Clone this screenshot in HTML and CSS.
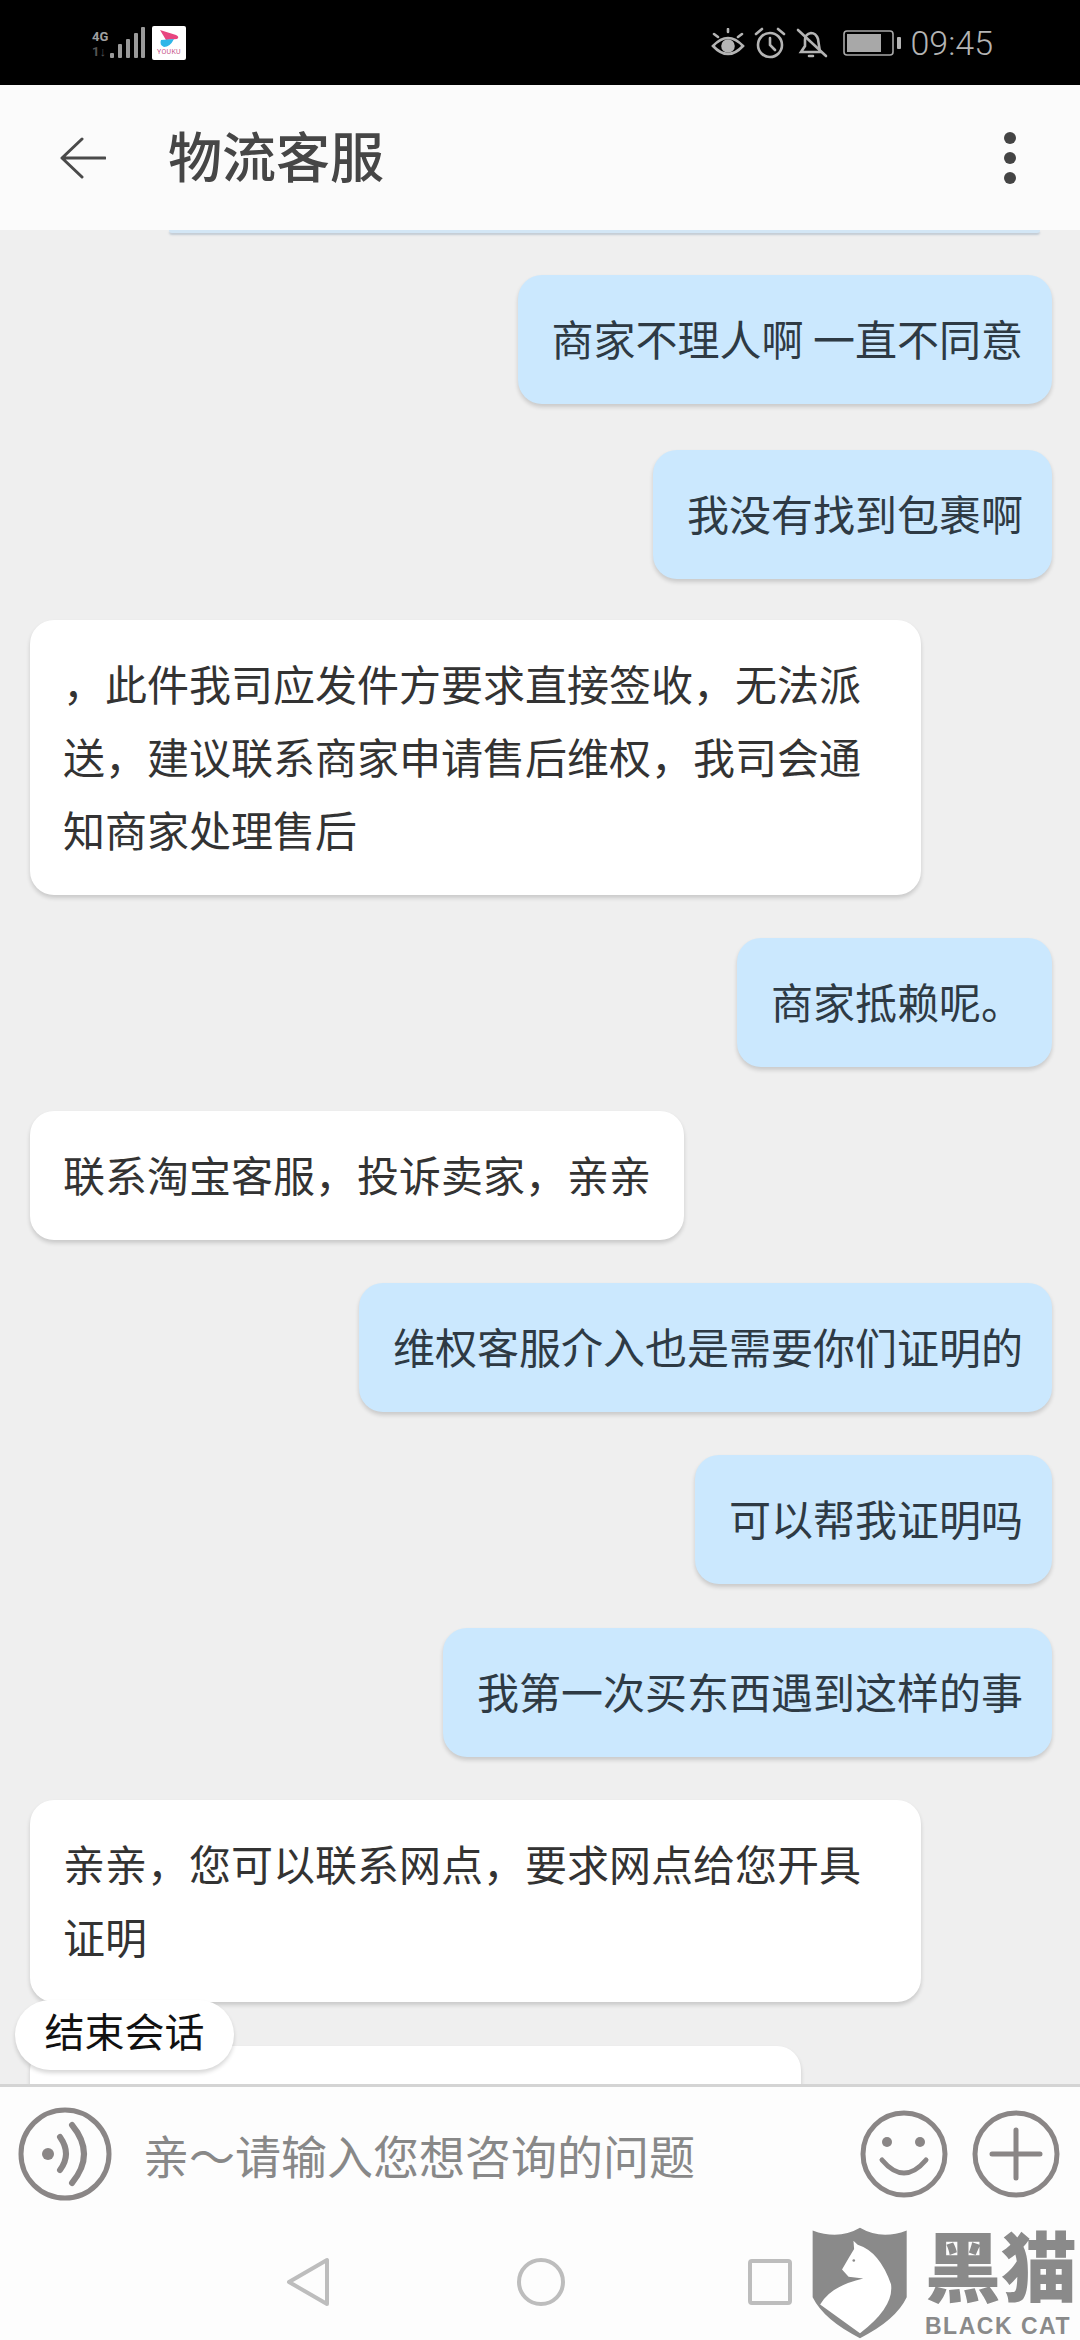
FILE: index.html
```html
<!DOCTYPE html>
<html lang="zh-CN">
<head>
<meta charset="utf-8">
<title>物流客服</title>
<link rel="stylesheet" href="styles.css">
</head>
<body>
<div class="page">
  <div class="status">
    <div class="net">
      <div class="net-labels"><span class="g4">4G</span><span class="g1">1↓</span></div>
      <svg class="signal" width="36" height="34" viewBox="0 0 36 34"><g fill="#9a9a9a"><rect x="0" y="27" width="4" height="5" rx="1"/><rect x="8" y="18" width="4" height="14" rx="1"/><rect x="16" y="13" width="4" height="19" rx="1"/><rect x="24" y="7" width="4" height="25" rx="1"/><rect x="31" y="1" width="4" height="31" rx="1"/></g></svg>
      <div class="youku">
        <svg width="24" height="20" viewBox="0 0 24 20"><path d="M3 2 L19 7 Q23 9 20 11 L9 12 Z" fill="#e8457f"/><path d="M4 12 L17 11 Q13 19 7 19 Q2 17 4 12Z" fill="#2fb7e8"/></svg>
        <span class="youku-name">YOUKU</span>
      </div>
    </div>
    <div class="sys">
      <svg class="sys-icon" width="36" height="30" viewBox="0 0 36 30" fill="none" stroke="#b4b4b4" stroke-width="2.6" stroke-linecap="round"><path d="M3 18 Q18 2 33 18 Q18 34 3 18Z"/><circle cx="18" cy="18" r="5.5" fill="#b4b4b4"/><path d="M4 6 L8 9M18 1 V4M32 6 L28 9"/></svg>
      <svg class="sys-icon" width="32" height="32" viewBox="0 0 32 32" fill="none" stroke="#b4b4b4" stroke-width="2.6" stroke-linecap="round"><circle cx="16" cy="18" r="12"/><path d="M16 11 V18 L21 23M2 7 L8 2M30 7 L24 2"/></svg>
      <svg class="sys-icon" width="32" height="32" viewBox="0 0 32 32" fill="none" stroke="#b4b4b4" stroke-width="2.6" stroke-linecap="round"><path d="M5 25 H24 L22 12 Q20 6 15 6 Q9 7 9 13 V19 Z"/><path d="M2 3 L30 29M13 29 H17"/></svg>
      <svg class="battery" width="58" height="26" viewBox="0 0 58 26"><rect x="1" y="1" width="49" height="24" rx="3" fill="none" stroke="#a8a8a8" stroke-width="1.6"/><rect x="4" y="4" width="34" height="18" fill="#a8a8a8"/><rect x="54" y="7" width="4" height="12" rx="1" fill="#b4b4b4"/></svg>
      <span class="time">09:45</span>
    </div>
  </div>

  <header class="topbar">
    <svg class="back" width="46" height="42" viewBox="0 0 46 42" fill="none" stroke="#4a4a4a" stroke-width="3" stroke-linecap="round" stroke-linejoin="round"><path d="M22 2 L2 21 L22 40M2 21 H45"/></svg>
    <h1 class="title">物流客服</h1>
    <div class="dots"><i></i><i></i><i></i></div>
  </header>

  <main class="chat">
    <div class="sliver"></div>
    <div class="bubble me">商家不理人啊 一直不同意</div>
    <div class="bubble me nudged">我没有找到包裹啊</div>
    <div class="bubble them">，此件我司应发件方要求直接签收，无法派送，建议联系商家申请售后维权，我司会通知商家处理售后</div>
    <div class="bubble me">商家抵赖呢。</div>
    <div class="bubble them">联系淘宝客服，投诉卖家，亲亲</div>
    <div class="bubble me">维权客服介入也是需要你们证明的</div>
    <div class="bubble me">可以帮我证明吗</div>
    <div class="bubble me">我第一次买东西遇到这样的事</div>
    <div class="bubble them">亲亲，您可以联系网点，要求网点给您开具证明</div>
    <div class="bubble them cut"></div>
    <div class="pill">结束会话</div>
  </main>

  <div class="inputbar">
    <svg class="voice" width="94" height="94" viewBox="0 0 94 94" fill="none" stroke="#8a8686" stroke-width="5" stroke-linecap="round"><circle cx="47" cy="47" r="44"/><circle cx="30" cy="47" r="6" fill="#8a8686" stroke="none"/><path d="M42 30 Q54 47 42 63" stroke-width="6"/><path d="M54 18 Q78 47 54 76" stroke-width="6"/></svg>
    <span class="placeholder">亲～请输入您想咨询的问题</span>
    <svg class="round" width="88" height="88" viewBox="0 0 88 88" fill="none" stroke="#8a8686" stroke-width="5" stroke-linecap="round"><circle cx="44" cy="44" r="41"/><circle cx="27" cy="32" r="5" fill="#8a8686" stroke="none"/><circle cx="60" cy="32" r="5" fill="#8a8686" stroke="none"/><path d="M22 50 Q44 76 66 50"/></svg>
    <svg class="round plus" width="88" height="88" viewBox="0 0 88 88" fill="none" stroke="#8a8686" stroke-width="5" stroke-linecap="round"><circle cx="44" cy="44" r="41"/><path d="M44 20 V68M20 44 H68"/></svg>
  </div>

  <nav class="navbar">
    <svg width="44" height="50" viewBox="0 0 44 50" fill="none" stroke="#bdbdbd" stroke-width="4" stroke-linejoin="round"><path d="M41 3 V47 L3 25 Z"/></svg>
    <svg class="nav-home" width="50" height="50" viewBox="0 0 50 50" fill="none" stroke="#bdbdbd" stroke-width="4"><circle cx="25" cy="25" r="22"/></svg>
    <svg width="44" height="46" viewBox="0 0 44 46" fill="none" stroke="#bdbdbd" stroke-width="4"><rect x="2" y="2" width="40" height="42" rx="2"/></svg>
  </nav>

  <div class="mark">
    <svg class="shield" width="97" height="112" viewBox="90 195 297 342"><path d="M95 205 Q175 235 240 197 Q305 235 383 205 L383 410 Q350 480 240 535 Q130 480 95 410 Z" fill="#8a8a8a"/><path d="M220 237 L233 249 Q300 270 335 370 Q345 440 240 520 L118 432 Q150 375 250 352 L205 347 L185 325 L205 290 L222 262 Z" fill="#fff"/><circle cx="221" cy="297" r="4" fill="#8a8a8a"/></svg>
    <div class="mark-text">
      <span class="mark-cn">黑猫</span>
      <span class="mark-en">BLACK CAT</span>
    </div>
  </div>
</div>
</body>
</html>
```
FILE: styles.css
```css
* { box-sizing: border-box; }
html, body { margin: 0; padding: 0; }
body { width: 1080px; height: 2340px; overflow: hidden; font-family: "Noto Sans CJK SC", "Noto Sans", sans-serif; background: #fbfbfb; }
.page { position: relative; width: 1080px; height: 2340px; display: flex; flex-direction: column; overflow: hidden; }

.status { height: 85px; flex: none; background: #000; display: flex; align-items: center; justify-content: space-between; padding: 0 87px 0 92px; }
.net { display: flex; align-items: center; }
.net-labels { display: flex; flex-direction: column; width: 18px; font: bold 13px/15px "Roboto", sans-serif; color: #a0a0a0; margin-top: 2px; }
.g1 { color: #555; }
.youku { width: 34px; height: 34px; margin-left: 6px; background: #fff; border-radius: 2px; display: flex; flex-direction: column; align-items: center; overflow: hidden; padding-top: 2px; }
.youku-name { font: 7px/9px "Roboto", sans-serif; color: #c8558a; letter-spacing: .3px; }
.sys { display: flex; align-items: center; }
.sys-icon { margin-right: 10px; }
.sys-icon:first-child { margin-right: 8px; }
.battery { margin-left: 5px; margin-right: 9px; }
.time { font: 300 34px/40px "Roboto", sans-serif; color: #b4b4b4; }

.topbar { height: 145px; flex: none; background: #fbfbfb; display: flex; align-items: center; padding: 0 64px 0 60px; z-index: 1; }
.back { flex: none; }
.title { margin: 0 0 6px 62px; font-size: 54px; line-height: 70px; font-weight: 500; color: #464646; flex: 1; }
.dots { display: flex; flex-direction: column; gap: 8px; }
.dots i { display: block; width: 12px; height: 12px; border-radius: 50%; background: #444; }

.chat { position: relative; height: 1857px; flex: none; background: #efefef; overflow: hidden; display: flex; flex-direction: column; gap: 43.4px; border-bottom: 3px solid #d4d4d4; }
.sliver { flex: none; height: 3px; margin: 0 40px -1.4px 169px; background: #d3e6f5; border-radius: 0 0 8px 8px; box-shadow: 0 2px 2px rgba(90,120,150,.3); }
.bubble { flex: none; font-size: 42px; line-height: 73px; padding: 26px 33px 30px; border-radius: 24px; box-shadow: 0 3px 4px rgba(0,0,0,.16); }
.me { align-self: flex-end; margin-right: 28px; padding-left: 34px; padding-right: 29px; background: #cbe8fe; color: #2e3a44; }
.nudged { margin-top: 3px; margin-bottom: -3px; }
.them { align-self: flex-start; margin-left: 30px; background: #fff; color: #333; max-width: 891px; }
.cut { width: 771px; height: 120px; }
.pill { position: absolute; left: 15px; top: 1770px; width: 219px; height: 70px; border-radius: 35px; background: #fff; font-size: 40px; line-height: 60px; text-align: center; color: #111; box-shadow: 0 3px 4px rgba(0,0,0,.16); }

.inputbar { height: 133px; flex: none; background: #fdfdfd; display: flex; align-items: center; padding: 0 20px 0 18px; }
.placeholder { flex: 1; margin-left: 31px; font-size: 46px; color: #888; white-space: nowrap; }
.round { flex: none; }
.plus { margin-left: 24px; }

.navbar { flex: 1; background: #fdfdfd; display: flex; align-items: center; justify-content: flex-start; padding: 4px 0 0 286px; gap: 186px; }
.nav-home { margin-right: -4px; }

.mark { position: absolute; left: 811px; top: 2227px; display: flex; gap: 17px; }
.shield { flex: none; }
.mark-text { display: flex; flex-direction: column; align-items: flex-start; color: #8a8a8a; white-space: nowrap; }
.mark-cn { font-family: "Liberation Sans", "Noto Sans CJK SC", sans-serif; font-size: 76px; line-height: 78px; font-weight: 900; margin-top: 4px; }
.mark-en { font: bold 23px/26px "Liberation Sans", sans-serif; letter-spacing: 1.5px; margin-top: 4px; }
```
